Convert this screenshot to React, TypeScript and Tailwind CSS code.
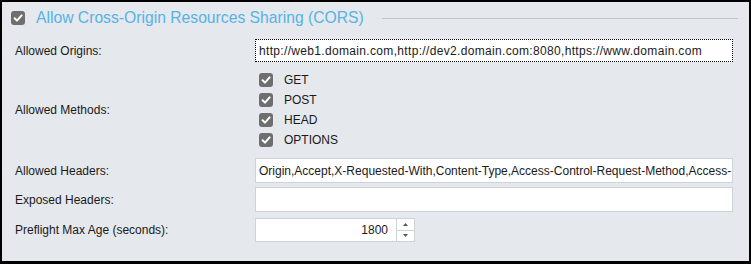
import React from "react";

function Check({ size = 14 }: { size?: number }) {
  return (
    <span
      className="inline-flex items-center justify-center rounded-[3px] bg-[#6e6e6e] shrink-0"
      style={{ width: size, height: size }}
    >
      <svg width={size - 4} height={size - 4} viewBox="0 0 10 10">
        <path d="M1.6 5.2 L4 7.6 L8.6 2.4" fill="none" stroke="#fff" strokeWidth="2" strokeLinecap="round" strokeLinejoin="round" />
      </svg>
    </span>
  );
}

const font = { fontFamily: '"Liberation Sans", Arial, sans-serif' };

export default function App() {
  const methods = ["GET", "POST", "HEAD", "OPTIONS"];
  return (
    <div
      className="w-[751px] h-[264px] border-t-2 border-l-2 border-r-2 border-b-[3px] border-black bg-[#e5e8ed] text-[12px] text-[#1a1a1a] overflow-hidden"
      style={font}
    >
      <div className="flex items-center h-[14px] mt-[9px] pl-[9px] pr-[11px]">
        <Check size={14} />
        <span className="ml-[11px] text-[15.7px] leading-none text-[#55b3e6] whitespace-nowrap">
          Allow Cross-Origin Resources Sharing (CORS)
        </span>
        <div className="flex-1 ml-[18px] h-px bg-[#c2c4c8]" />
      </div>

      <div className="flex items-center mt-[14px] h-[23px]">
        <div className="w-[253px] pl-[13px]">Allowed Origins:</div>
        <div className="w-[478px] h-[23px] bg-white border border-dotted border-black flex items-center px-[3px] whitespace-nowrap overflow-hidden tracking-[0.33px]">
          http://web1.domain.com,http://dev2.domain.com:8080,https://www.domain.com
        </div>
      </div>

      <div className="flex items-center mt-[8px] h-[80px]">
        <div className="w-[253px] pl-[13px]">Allowed Methods:</div>
        <div className="flex flex-col pl-[4px]">
          {methods.map((m) => (
            <div key={m} className="flex items-center h-[20px]">
              <Check size={14} />
              <span className="ml-[11px]">{m}</span>
            </div>
          ))}
        </div>
      </div>

      <div className="flex items-center mt-[8px] h-[25px]">
        <div className="w-[253px] pl-[13px]">Allowed Headers:</div>
        <div className="w-[478px] h-[25px] bg-white border border-[#cfd2d6] flex items-center px-[3px] whitespace-nowrap overflow-hidden">
          Origin,Accept,X-Requested-With,Content-Type,Access-Control-Request-Method,Access-
        </div>
      </div>

      <div className="flex items-center mt-[4px] h-[25px]">
        <div className="w-[253px] pl-[13px]">Exposed Headers:</div>
        <div className="w-[478px] h-[25px] bg-white border border-[#cfd2d6]" />
      </div>

      <div className="flex items-center mt-[6px] h-[24px]">
        <div className="w-[253px] pl-[13px]">Preflight Max Age (seconds):</div>
        <div className="flex h-[24px]">
          <div className="w-[142px] h-full bg-white border border-[#cfd2d6] flex items-center justify-end pr-[8px]">
            1800
          </div>
          <div className="w-[18px] h-full flex flex-col border border-l-0 border-[#cfd2d6] bg-white">
            <div className="flex-1 flex items-center justify-center border-b border-[#cfd2d6]">
              <svg width="5" height="3" viewBox="0 0 5 3"><path d="M2.5 0 L5 3 L0 3 Z" fill="#555" /></svg>
            </div>
            <div className="flex-1 flex items-center justify-center">
              <svg width="5" height="3" viewBox="0 0 5 3"><path d="M0 0 L5 0 L2.5 3 Z" fill="#555" /></svg>
            </div>
          </div>
        </div>
      </div>
    </div>
  );
}
